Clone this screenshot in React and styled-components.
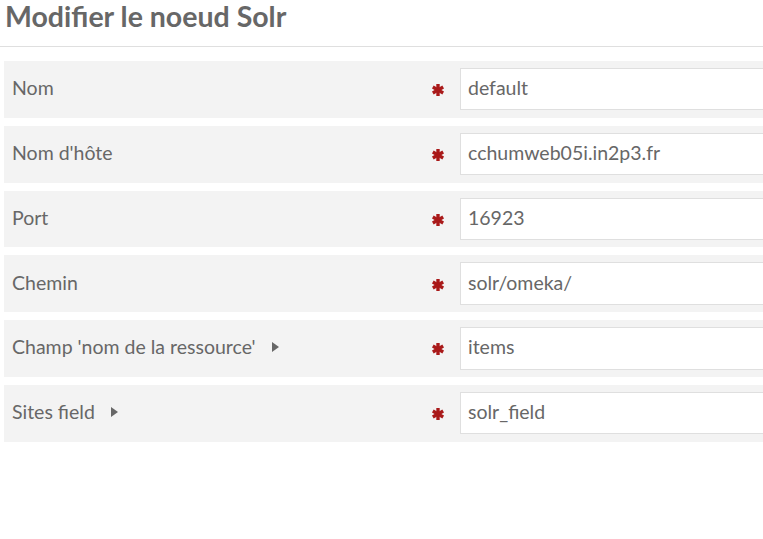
import React from "react";
import styled, { createGlobalStyle } from "styled-components";

const Global = createGlobalStyle`
  html, body { margin: 0; padding: 0; background: #fff; overflow: hidden; }
  body { font-family: Lato, "Open Sans", sans-serif; color: #676767; }
`;

const Page = styled.div`
  width: 763px;
  height: 539px;
  overflow: hidden;
`;

const Header = styled.header`
  border-bottom: 1px solid #dfdfdf;
  height: 47px;
  box-sizing: border-box;
  padding-left: 5px;
  padding-top: 1px;
`;

const Title = styled.h1`
  margin: 0;
  font-size: 28.5px;
  font-weight: 700;
  line-height: 30px;
  color: #676767;
`;

const Form = styled.div`
  padding: 14px 0 0 4px;
  width: 1000px;
`;

const Row = styled.div`
  display: grid;
  grid-template-columns: 420px 28px 1fr;
  align-items: center;
  background: #f3f3f3;
  padding: 7px 0 7.4px 8px;
  margin-bottom: 8px;
`;

const Meta = styled.div`
  display: flex;
  align-items: center;
  padding-bottom: 3px;
`;

const Label = styled.label`
  font-size: 19.5px;
  color: #676767;
`;

const Caret = styled.span`
  display: inline-block;
  width: 0;
  height: 0;
  border-top: 5px solid transparent;
  border-bottom: 5px solid transparent;
  border-left: 7px solid #676767;
  margin-left: 16px;
  margin-top: 1px;
`;

const Required = styled.svg`
  display: block;
  justify-self: start;
  margin-top: 2px;
`;

const Input = styled.input`
  box-sizing: border-box;
  height: 42.4px;
  width: 100%;
  border: 1px solid #dfdfdf;
  background: #fff;
  padding: 0 7px 3px;
  font-family: Lato, "Open Sans", sans-serif;
  font-size: 19.5px;
  color: #676767;
  outline: none;
`;

const Asterisk = () => (
  <Required width="12" height="12" viewBox="0 0 12 12" aria-label="requis">
    <g stroke="#a91919" strokeWidth="3.4" strokeLinecap="butt">
      <line x1="6" y1="0" x2="6" y2="12" />
      <line x1="0.8" y1="3" x2="11.2" y2="9" />
      <line x1="0.8" y1="9" x2="11.2" y2="3" />
    </g>
  </Required>
);

const fields = [
  { label: "Nom", value: "default" },
  { label: "Nom d'hôte", value: "cchumweb05i.in2p3.fr" },
  { label: "Port", value: "16923" },
  { label: "Chemin", value: "solr/omeka/" },
  { label: "Champ 'nom de la ressource'", value: "items", caret: true },
  { label: "Sites field", value: "solr_field", caret: true },
];

export default function App() {
  return (
    <Page>
      <Global />
      <Header>
        <Title>Modifier le noeud Solr</Title>
      </Header>
      <Form>
        {fields.map((f) => (
          <Row key={f.label}>
            <Meta>
              <Label>{f.label}</Label>
              {f.caret && <Caret />}
            </Meta>
            <Asterisk />
            <Input defaultValue={f.value} />
          </Row>
        ))}
      </Form>
    </Page>
  );
}
